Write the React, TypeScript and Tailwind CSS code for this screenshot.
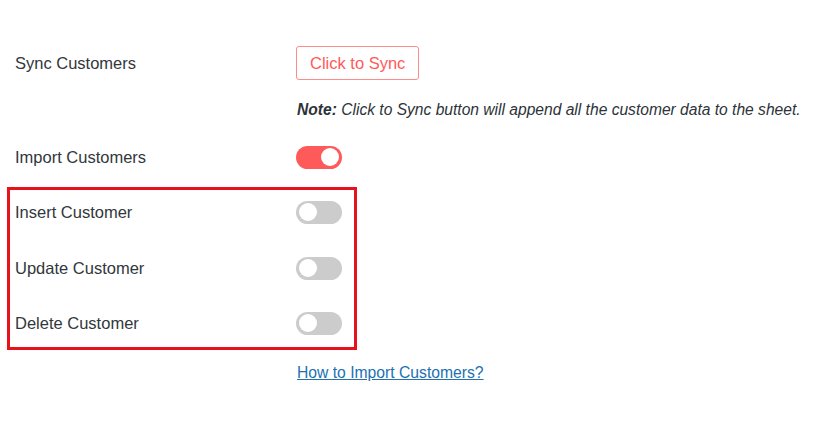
import React, { useState } from "react";

// Customer sync settings panel: sync button, import toggle and
// the insert/update/delete sub-options highlighted in a red box.

function Toggle({ on, onChange }: { on: boolean; onChange: () => void }) {
  return (
    <button
      type="button"
      onClick={onChange}
      className={`relative h-[23px] w-[46px] rounded-full transition ${on ? "bg-[#ff5a5a]" : "bg-[#cccccc]"}`}
    >
      <span
        className={`absolute top-[2.5px] h-[18px] w-[18px] rounded-full bg-white transition ${on ? "left-[25px]" : "left-[3px]"}`}
      />
    </button>
  );
}

function Row({ label, children }: { label: string; children: React.ReactNode }) {
  return (
    <div className="flex h-[24px] items-center">
      <span className="w-[281px] text-[16.5px] text-[#32373c]">{label}</span>
      {children}
    </div>
  );
}

export default function App() {
  const [importOn, setImportOn] = useState(true);
  const [flags, setFlags] = useState({ insert: false, update: false, del: false });
  const flip = (k: keyof typeof flags) => setFlags((f) => ({ ...f, [k]: !f[k] }));

  return (
    <div className="h-[440px] w-[820px] bg-white pl-[15px] pt-[46px] font-['Liberation_Sans',Arial,sans-serif]">
      <div className="flex h-[34px] items-center">
        <span className="w-[281px] text-[16.5px] text-[#32373c]">Sync Customers</span>
        <button
          type="button"
          className="h-[34px] rounded-[3px] border border-[#ff8a8a] px-[13px] text-[16.5px] text-[#ff5a5a]"
        >
          Click to Sync
        </button>
      </div>

      <p className="ml-[282px] mt-[20px] h-[20px] text-[15.6px] leading-[20px] text-[#2c3338] italic">
        <b>Note:</b> Click to Sync button will append all the customer data to the sheet.
      </p>

      <div className="mt-[25px]">
        <Row label="Import Customers">
          <Toggle on={importOn} onChange={() => setImportOn(!importOn)} />
        </Row>
      </div>

      <div className="ml-[-8px] mt-[18px] w-[350px] border-[3px] border-[#e8111c] pb-[12px] pl-[5px] pt-[10px]">
        <Row label="Insert Customer">
          <Toggle on={flags.insert} onChange={() => flip("insert")} />
        </Row>
        <div className="mt-[32px]">
          <Row label="Update Customer">
            <Toggle on={flags.update} onChange={() => flip("update")} />
          </Row>
        </div>
        <div className="mt-[31px]">
          <Row label="Delete Customer">
            <Toggle on={flags.del} onChange={() => flip("del")} />
          </Row>
        </div>
      </div>

      <div className="ml-[282px] mt-[13px] h-[20px] leading-[20px]">
        <a href="#" className="text-[15.7px] text-[#2271b1] underline">
          How to Import Customers?
        </a>
      </div>
    </div>
  );
}
